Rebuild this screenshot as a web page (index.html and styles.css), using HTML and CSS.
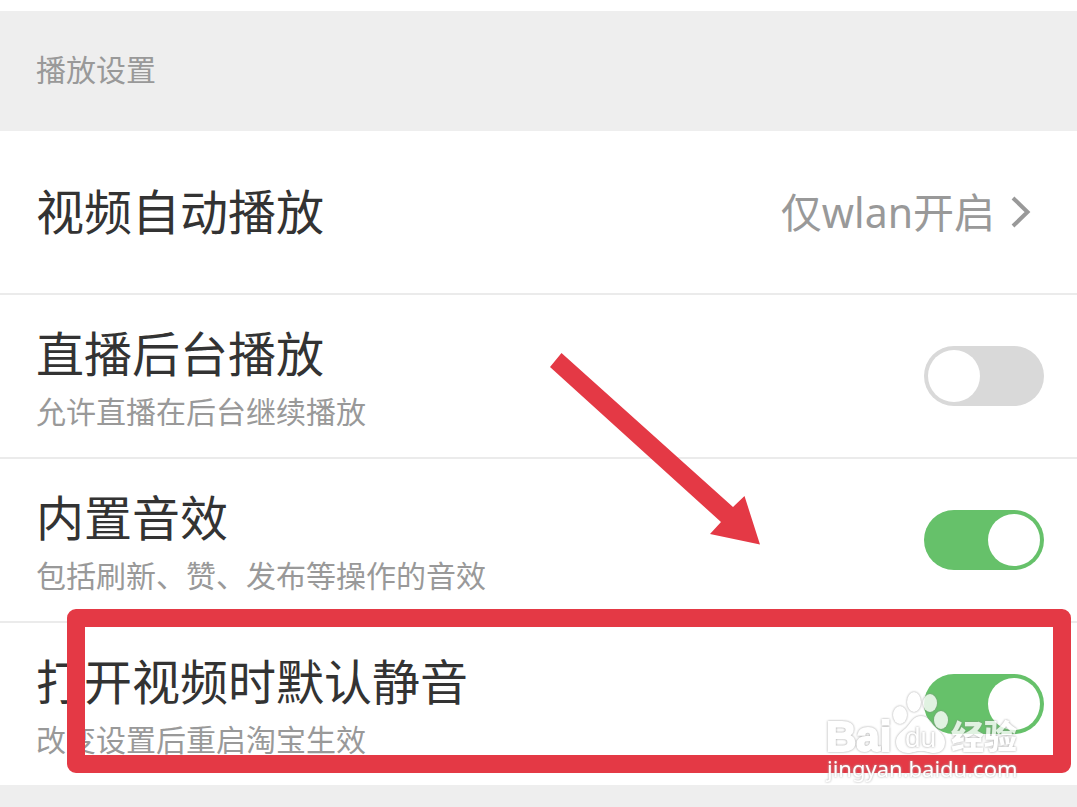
FILE: index.html
```html
<!DOCTYPE html>
<html lang="zh-CN">
<head>
<meta charset="utf-8">
<meta name="viewport" content="width=device-width, initial-scale=1">
<title>播放设置</title>
<link rel="stylesheet" href="styles.css">
</head>
<body>
<main class="page">
  <h1 class="section-title">播放设置</h1>
  <div class="list">
    <a class="row" href="#autoplay">
      <span class="text"><span class="label label-single">视频自动播放</span></span>
      <span class="value">仅wlan开启
        <svg class="chevron" viewBox="0 0 20 32" aria-hidden="true"><path d="M2 2 16.500 16 2 30"/></svg>
      </span>
    </a>
    <div class="row">
      <label class="text" for="live">
        <span class="label">直播后台播放</span>
        <span class="hint">允许直播在后台继续播放</span>
      </label>
      <input class="switch" type="checkbox" role="switch" id="live">
      <svg class="arrow" viewBox="0 0 212 194" aria-hidden="true"><path d="M12.500 0 184 154 195.500 143 211 191.500 161 181 172 169 1 14Z"/></svg>
    </div>
    <div class="row">
      <label class="text" for="sound">
        <span class="label">内置音效</span>
        <span class="hint">包括刷新、赞、发布等操作的音效</span>
      </label>
      <input class="switch" type="checkbox" role="switch" id="sound" checked>
    </div>
    <div class="row">
      <label class="text" for="mute">
        <span class="label">打开视频时默认静音</span>
        <span class="hint">改变设置后重启淘宝生效</span>
      </label>
      <input class="switch" type="checkbox" role="switch" id="mute" checked>
      <div class="frame"></div>
      <svg class="watermark" viewBox="0 0 200 100" role="img" aria-label="Baidu 经验">
        <g class="mark">
          <text class="brand" x="2" y="63">Bai</text>
          <ellipse cx="76" cy="27" rx="7" ry="9"/>
          <ellipse cx="90" cy="14" rx="7" ry="10"/>
          <ellipse cx="106" cy="15" rx="7" ry="9"/>
          <ellipse cx="117" cy="32" rx="7" ry="9"/>
          <path d="M97 28C89 28 87 35 82 40C76 45 72 48 72 54C72 61 77 65 84 65C89 65 91 63 97 63C103 63 105 65 110 65C117 65 121 61 121 54C121 48 117 45 112 40C107 35 105 28 97 28Z"/>
          <text class="du" x="81" y="59">du</text>
          <text class="cn" x="127" y="61">经验</text>
        </g>
        <text class="url" x="3" y="89">jingyan.baidu.com</text>
      </svg>
    </div>
  </div>
</main>
</body>
</html>
```
FILE: styles.css
```css
* {
  box-sizing: border-box;
}

body {
  margin: 0;
  background: #eee;
  color: #333;
  font-family: "Noto Sans CJK SC", sans-serif;
}

.page {
  border-top: 11px solid #fff;
  overflow: hidden;
}

.section-title {
  margin: 0;
  padding: 37px 36px 43px;
  color: #999;
  font-size: 30px;
  font-weight: 400;
  line-height: 40px;
}

.list {
  background: #fff;
}

.row {
  position: relative;
  display: flex;
  align-items: center;
  justify-content: space-between;
  min-height: 164px;
  padding: 0 33px 0 36px;
  border-bottom: 2px solid #ebebeb;
  color: inherit;
  text-decoration: none;
}

.row:last-child {
  min-height: 162px;
  border-bottom: 0;
}

.text {
  display: flex;
  flex-direction: column;
  gap: 7px;
  padding-bottom: 4px;
}

.label {
  font-size: 48px;
  line-height: 64px;
}

.label-single {
  padding-bottom: 2px;
}

.hint {
  color: #999;
  font-size: 30px;
  line-height: 40px;
}

.value {
  display: flex;
  align-items: center;
  gap: 16px;
  padding-right: 13px;
  color: #999;
  font-family: "Noto Sans", "Noto Sans CJK SC", sans-serif;
  font-size: 41px;
  line-height: 64px;
}

.chevron {
  width: 20px;
  height: 32px;
  fill: none;
  stroke: #999;
  stroke-width: 4;
}

.switch {
  appearance: none;
  flex: none;
  display: flex;
  width: 120px;
  height: 60px;
  margin: 0;
  padding: 4px;
  border-radius: 30px;
  background: #d9d9d9;
}

.switch::before {
  content: "";
  width: 52px;
  height: 52px;
  border-radius: 50%;
  background: #fff;
}

.switch:checked {
  justify-content: flex-end;
  background: #66c16a;
}

.arrow {
  position: absolute;
  top: 58px;
  right: 316px;
  z-index: 1;
  width: 212px;
  height: 194px;
  fill: #e43945;
}

.frame {
  position: absolute;
  inset: -14px 6px 12px 67px;
  border: 18px solid #e43945;
  border-radius: 9px;
  pointer-events: none;
}

.watermark {
  position: absolute;
  top: 65px;
  right: 53px;
  width: 200px;
  height: 100px;
  overflow: visible;
  pointer-events: none;
}

.mark {
  fill: #fff;
  opacity: 0.8;
}

.mark > * {
  filter: drop-shadow(0 0 1px #888);
}

.brand {
  stroke: #fff;
  stroke-width: 2;
  font: 700 42px "Liberation Sans", sans-serif;
}

.du {
  font: 400 28px "Liberation Sans", sans-serif;
}

.cn {
  font: 900 33px "Noto Sans CJK SC", sans-serif;
}

.url {
  fill: #fff;
  filter: drop-shadow(0 0 1px #aaa);
  font: 400 22px "Noto Sans", sans-serif;
}
```
